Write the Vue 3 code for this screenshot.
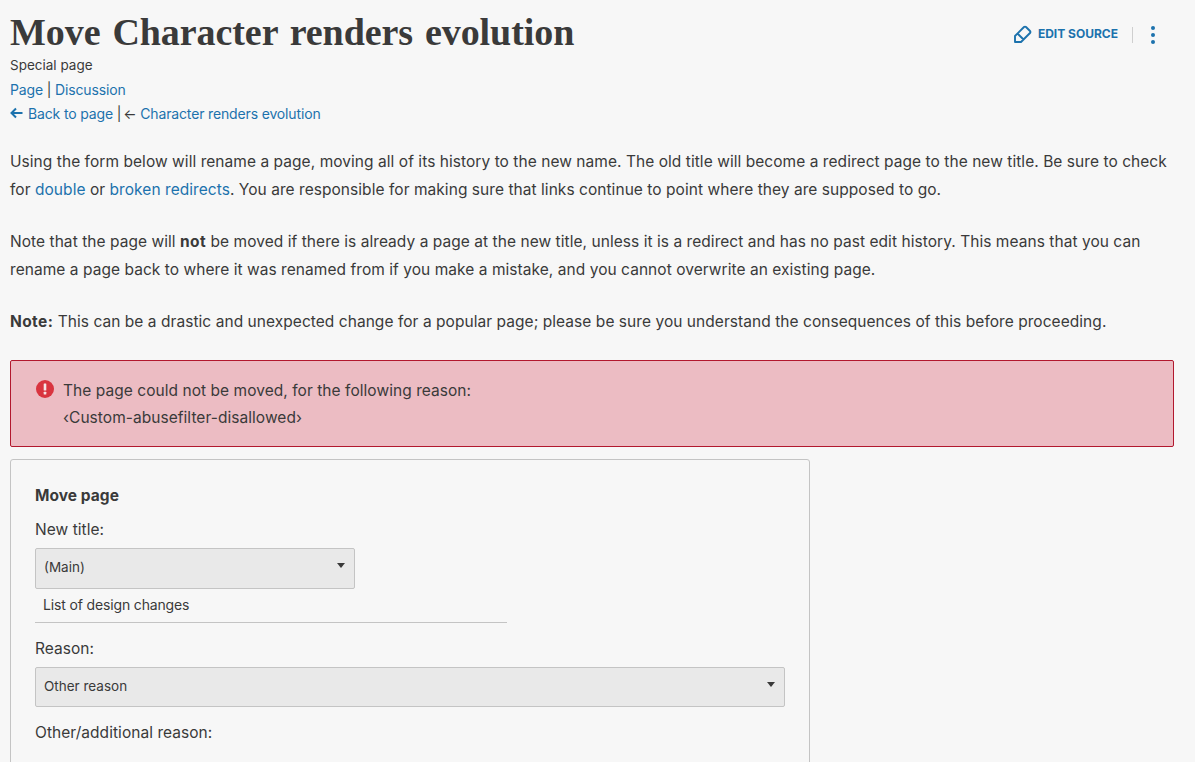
<script setup>
const intro = 'Using the form below will rename a page, moving all of its history to the new name. The old title will become a redirect page to the new title. Be sure to check for '
</script>

<template>
  <div class="page">
    <header class="head">
      <div class="head-text">
        <h1>Move Character renders evolution</h1>
        <div class="sub">Special page</div>
        <div class="line"><a>Page</a> | <a>Discussion</a></div>
        <div class="line back">
          <svg class="back-arrow" width="13" height="12" viewBox="0 0 13 12">
            <path d="M6 1.5 1.5 6 6 10.5M2 6h10.5" fill="none" stroke="#1c72ad" stroke-width="2" />
          </svg>
          <a>Back to page</a> |<span class="tiny">←</span> <a>Character renders evolution</a>
        </div>
      </div>
      <div class="actions">
        <svg class="pencil" width="20" height="20" viewBox="0 0 20 20">
          <path d="M2 12 11 3a1.400 1.400 0 0 1 2 0l4 4a1.400 1.400 0 0 1 0 2l-9 9H2zM4.500 9.500l6 6" fill="none" stroke="#1c72ad" stroke-width="1.900" stroke-linejoin="round" />
        </svg>
        <span class="edit">EDIT SOURCE</span>
        <span class="sep"></span>
        <span class="dots"><i></i><i></i><i></i></span>
      </div>
    </header>

    <main class="body">
      <p>{{ intro }}<a>double</a> or <a>broken redirects</a>. You are responsible for making sure that links continue to point where they are supposed to go.</p>
      <p>Note that the page will <b>not</b> be moved if there is already a page at the new title, unless it is a redirect and has no past edit history. This means that you can rename a page back to where it was renamed from if you make a mistake, and you cannot overwrite an existing page.</p>
      <p><b>Note:</b> This can be a drastic and unexpected change for a popular page; please be sure you understand the consequences of this before proceeding.</p>

      <div class="error">
        <svg class="error-icon" width="18" height="18" viewBox="0 0 18 18">
          <circle cx="9" cy="9" r="9" fill="#d9343f" />
          <rect x="7.700" y="3.500" width="2.600" height="7" rx="0.500" fill="#f6e4e6" />
          <rect x="7.700" y="11.800" width="2.600" height="2.600" rx="0.500" fill="#f6e4e6" />
        </svg>
        <div class="error-text">
          <div>The page could not be moved, for the following reason:</div>
          <div>‹Custom-abusefilter-disallowed›</div>
        </div>
      </div>

      <fieldset class="form">
        <div class="legend">Move page</div>
        <div class="label first">New title:</div>
        <div class="select ns"><span>(Main)</span><i class="caret"></i></div>
        <div class="title-input">List of design changes</div>
        <div class="label reason">Reason:</div>
        <div class="select wide"><span>Other reason</span><i class="caret"></i></div>
        <div class="label other">Other/additional reason:</div>
      </fieldset>
    </main>
  </div>
</template>

<style scoped>
.page {
  height: 762px;
  overflow: hidden;
  padding: 0 21px 0 10px;
  box-sizing: border-box;
  background: #f7f7f7;
  color: #3a3a3a;
  font-family: Inter, "Liberation Sans", sans-serif;
  font-size: 15.5px;
  letter-spacing: 0.05px;
}
a {
  color: #1c72ad;
}
b {
  letter-spacing: 0.4px;
}
.head {
  display: flex;
  justify-content: space-between;
  align-items: flex-start;
}
h1 {
  margin: 0;
  padding-top: 9px;
  font-family: "Liberation Serif", serif;
  font-size: 38px;
  line-height: 46px;
  font-weight: 700;
  letter-spacing: -0.07px;
  word-spacing: 2.500px;
  color: #3a3a3a;
}
.sub {
  font-size: 13.500px;
  letter-spacing: 0;
  line-height: 20px;
}
.line {
  font-size: 14px;
  letter-spacing: -0.15px;
  line-height: 20px;
  margin-top: 5px;
}
.line.back {
  margin-top: 4px;
}
.back-arrow {
  margin-right: 5px;
}
.tiny {
  margin-left: 2px;
}
.actions {
  display: flex;
  align-items: center;
  margin-top: 23px;
  margin-right: 15px;
}
.pencil {
  margin-right: 5px;
}
.edit {
  font-size: 12px;
  font-weight: 700;
  letter-spacing: 0;
  color: #1c72ad;
}
.sep {
  width: 1px;
  height: 16px;
  background: #cfcfcf;
  margin: 2px 14px 0;
}
.dots {
  display: flex;
  flex-direction: column;
  gap: 3px;
  margin: 3px 4px 0 4px;
}
.dots i {
  width: 4px;
  height: 4px;
  border-radius: 50%;
  background: #1c72ad;
}
.body {
  margin-top: 24px;
}
p {
  margin: 0 0 24px;
  line-height: 28px;
}
.error {
  display: flex;
  height: 87px;
  box-sizing: border-box;
  margin-top: 3px;
  padding: 16px 24px 16px 25px;
  gap: 9px;
  background: #ecbcc3;
  border: 1px solid #b2182e;
  border-radius: 2px;
}
.error-icon {
  flex: none;
  margin-top: 3px;
}
.error-text {
  line-height: 27px;
}
.form {
  margin: 12px 0 0;
  width: 800px;
  height: 400px;
  box-sizing: border-box;
  padding: 24px;
  border: 1px solid #c4c4c4;
  border-radius: 3px;
  min-width: 0;
}
.legend {
  font-weight: 700;
  line-height: 24px;
}
.label {
  line-height: 24px;
}
.label.first {
  margin-top: 10px;
}
.select {
  display: flex;
  align-items: center;
  justify-content: space-between;
  box-sizing: border-box;
  padding: 0 9px 3px 8px;
  background: #e9e9e9;
  border: 1px solid #c4c4c4;
  border-radius: 2px;
  font-size: 13.500px;
  letter-spacing: 0;
}
.ns {
  width: 320px;
  height: 41px;
  margin-top: 6px;
}
.wide {
  width: 750px;
  height: 40px;
  margin-top: 6px;
}
.caret {
  width: 0;
  height: 0;
  border: 4.500px solid transparent;
  border-top: 5px solid #3a3a3a;
  border-bottom: 0;
  margin-top: -3px;
}
.title-input {
  width: 472px;
  box-sizing: border-box;
  padding: 6px 8px 7px;
  font-size: 14px;
  letter-spacing: -0.15px;
  line-height: 20px;
  border-bottom: 1px solid #c4c4c4;
}
.label.reason {
  margin-top: 14px;
}
.label.other {
  margin-top: 14px;
}
</style>

<style>
html,
body {
  background: #f7f7f7;
  overflow: hidden;
}
</style>
